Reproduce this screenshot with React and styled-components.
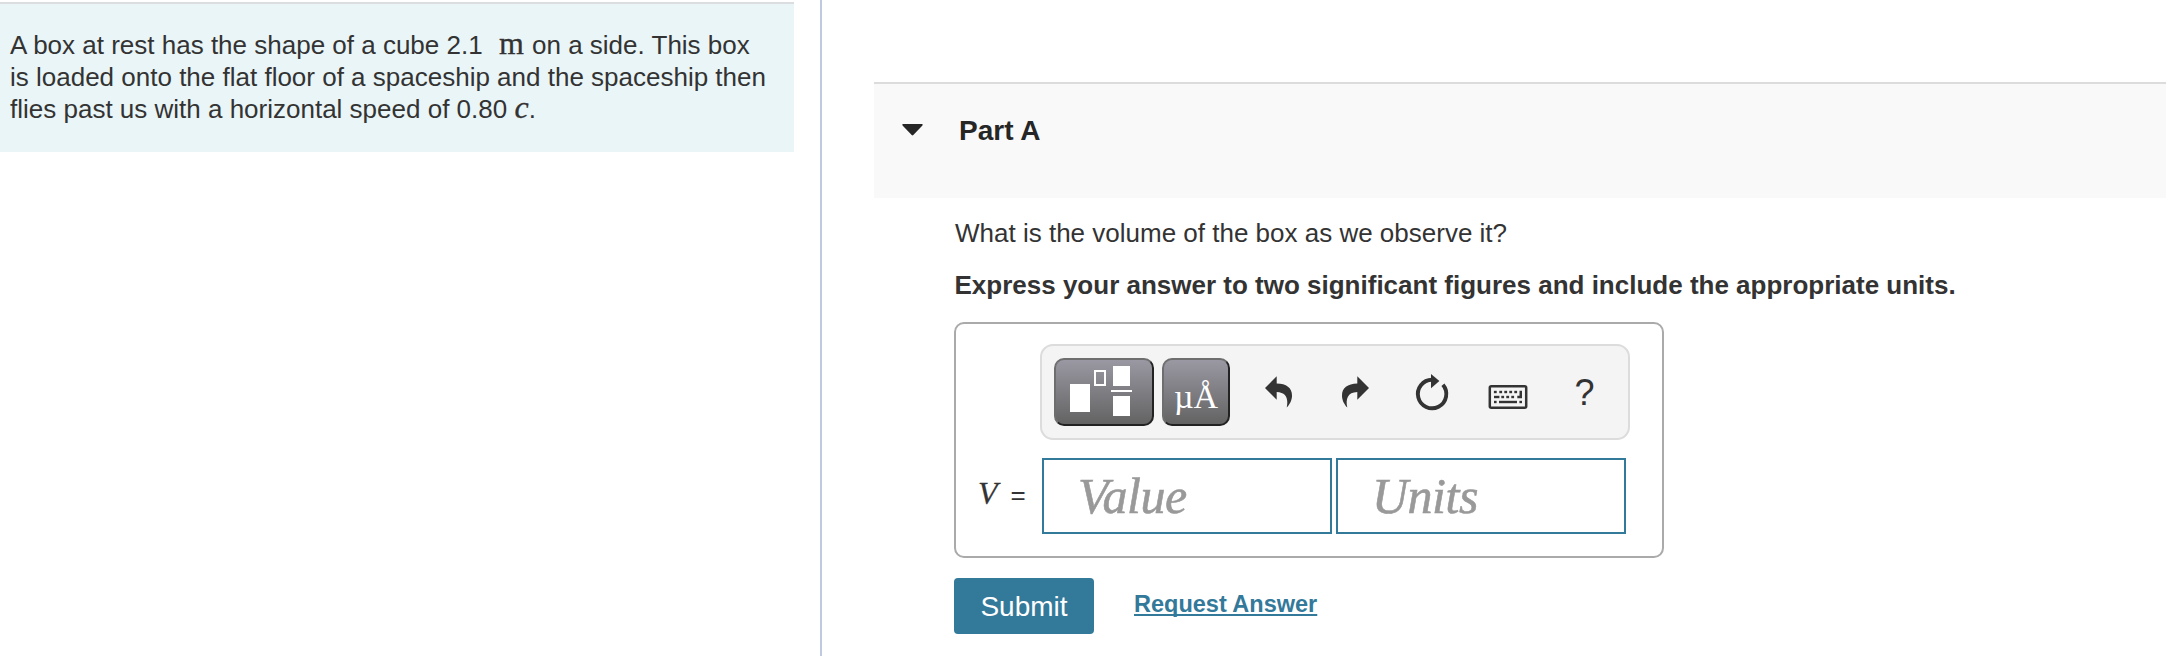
import React from "react";
import styled, { createGlobalStyle } from "styled-components";

const GlobalStyle = createGlobalStyle`
  body {
    margin: 0;
    background: #fff;
    color: #333;
    font-family: "Liberation Sans", Arial, sans-serif;
    font-size: 26px;
    line-height: 32px;
  }

  * {
    box-sizing: border-box;
  }
`;

const Page = styled.div`
  display: flex;
  height: 656px;
  overflow: hidden;
`;

const Sidebar = styled.aside`
  width: 822px;
  flex-shrink: 0;
  padding-top: 2px;
  border-right: 2px solid #bfcadf;
`;

const Intro = styled.div`
  width: 794px;
  height: 150px;
  padding: 25px 0 0 10px;
  border-top: 2px solid #dcdde0;
  background: #eaf5f7;
  white-space: nowrap;
`;

const MathText = styled.span`
  font-family: "Liberation Serif", serif;
  font-size: 32px;
  font-style: ${(props) => (props.$italic ? "italic" : "normal")};
  line-height: 0;
  margin-left: ${(props) => props.$gap || 0}px;
  margin-right: ${(props) => (props.$gap ? 1 : 0)}px;
  -webkit-text-stroke: 0.3px #333;
`;

const Main = styled.main`
  flex: 1;
  padding: 82px 0 0 52px;
`;

const PartHeader = styled.div`
  display: flex;
  height: 116px;
  padding: 30px 0 0 28px;
  border-top: 2px solid #dcdcdc;
  background: #f9f9f9;
`;

const Caret = styled.svg`
  width: 21px;
  height: 12px;
  margin-top: 10px;
`;

const PartTitle = styled.h2`
  margin: 0 0 0 36px;
  font-size: 28px;
  line-height: 34px;
  color: #262626;
`;

const PartBody = styled.div`
  padding: 19px 0 0 80px;
`;

const Question = styled.p`
  margin: 0 0 20px;
  padding-left: 1px;
`;

const Instruction = styled.p`
  margin: 0 0 21px;
  padding-left: 0.5px;
  font-weight: 700;
`;

const AnswerBox = styled.div`
  width: 710px;
  height: 236px;
  padding: 20px 32px 0 20px;
  border: 2px solid #aaa;
  border-radius: 10px;
`;

const Toolbar = styled.div`
  display: flex;
  width: 590px;
  height: 96px;
  margin-left: 64px;
  padding: 12px 8px 12px 12px;
  border: 2px solid #dcdcdc;
  border-radius: 13px;
  background: #f4f4f4;
`;

const DarkButton = styled.button`
  display: flex;
  flex-shrink: 0;
  justify-content: center;
  width: ${(props) => props.$width}px;
  height: 68px;
  margin: 0 8px 0 0;
  padding: 0;
  border: 2px solid;
  border-color: #6e6e6e #222 #222 #6e6e6e;
  border-radius: 10px;
  background: linear-gradient(#9a98a2, #636363);
  color: #fff;
  font-family: "Liberation Serif", serif;
  font-size: 34px;
  line-height: 74px;
`;

const ToolSlot = styled.button`
  display: block;
  flex-shrink: 0;
  width: 76px;
  height: 68px;
  margin: 0 0 0 ${(props) => props.$offset || 0}px;
  padding: 0;
  border: 0;
  background: none;
  color: #333;
  font: 36px/69px "Liberation Sans", sans-serif;
`;

const HelpSlot = styled(ToolSlot)`
  padding-left: 5px;
`;

const Icon = styled.svg`
  display: block;
  fill: #333;
`;

const InputRow = styled.div`
  display: flex;
  margin-top: 18px;
`;

const Label = styled.div`
  width: 66px;
  padding: 21px 0 0 2px;
  white-space: nowrap;
`;

const Equals = styled.span`
  margin-left: 13px;
`;

const Field = styled.input`
  width: 290px;
  height: 76px;
  margin: 0 4px 0 0;
  padding: 0 0 0 ${(props) => props.$indent}px;
  border: 2px solid #33799a;
  border-radius: 0;
  background: #fff;
  font-family: "Liberation Serif", serif;
  font-size: 50px;
  font-style: italic;
  letter-spacing: -0.5px;

  &::placeholder {
    color: #999;
    opacity: 1;
    -webkit-text-stroke: 0.6px #999;
  }
`;

const Actions = styled.div`
  display: flex;
  margin-top: 20px;
`;

const SubmitButton = styled.button`
  width: 140px;
  height: 56px;
  padding: 0;
  border: 0;
  border-radius: 4px;
  background: #33799a;
  color: #fff;
  font: 28px/57px "Liberation Sans", sans-serif;
`;

const RequestLink = styled.a`
  margin: 10px 0 0 40px;
  color: #33799a;
  font-size: 23.5px;
  font-weight: 700;
  text-decoration: underline;
  text-decoration-thickness: 2px;
  text-underline-offset: 2px;
  text-decoration-skip-ink: none;
`;

const arrow =
  "M25 30L36.7 18.3V25.6C46.5 25.8 52.2 30 52 38C51.9 42.5 49.5 46.8 46.7 49.5C48.5 41 46.5 34.3 36.7 34V41.7Z";

const TemplatesIcon = () => (
  <svg width="96" height="64" viewBox="2 2 96 64" fill="#fff">
    <rect x="16" y="26" width="20" height="28" />
    <rect x="41" y="13" width="10" height="14" fill="none" stroke="#fff" strokeWidth="2" />
    <rect x="59" y="8" width="17" height="20" />
    <rect x="57" y="32" width="21" height="2" />
    <rect x="59" y="38" width="17" height="20" />
  </svg>
);

const KeyboardIcon = () => (
  <Icon width="76" height="68">
    <rect x="21.8" y="28.2" width="36.4" height="21.6" rx="1.5" fill="none" stroke="#333" strokeWidth="2.5" />
    {[27.3, 32.7, 37.7, 42.7, 47.7].map((x) => (
      <rect key={x} x={x - 1.4} y="32.8" width="2.8" height="2.4" />
    ))}
    <rect x="26" y="37.8" width="5.4" height="2.4" />
    {[34.7, 39.7, 44.7].map((x) => (
      <rect key={x} x={x - 1.4} y="37.8" width="2.8" height="2.4" />
    ))}
    <path d="M51.5 32.8H54V40.2H49.3V37.8H51.5Z" />
    <rect x="26" y="42.8" width="2.6" height="2.4" />
    <rect x="31" y="42.8" width="18" height="2.4" />
    <rect x="51.4" y="42.8" width="2.6" height="2.4" />
  </Icon>
);

const App = () => {
  return (
    <Page>
      <GlobalStyle />
      <Sidebar>
        <Intro>
          A box at rest has the shape of a cube 2.1&nbsp;
          <MathText $gap={9}>m</MathText> on a side. This box
          <br />
          is loaded onto the flat floor of a spaceship and the spaceship then
          <br />
          flies past us with a horizontal speed of 0.80 <MathText $italic>c</MathText>.
        </Intro>
      </Sidebar>
      <Main>
        <PartHeader>
          <Caret viewBox="0 0 21 12">
            <path d="M1 0H20Q21.3 .6 20.2 1.7L11.3 11.1Q10.5 11.9 9.7 11.1L.8 1.7Q-.3 .6 1 0Z" fill="#262626" />
          </Caret>
          <PartTitle>Part A</PartTitle>
        </PartHeader>
        <PartBody>
          <Question>What is the volume of the box as we observe it?</Question>
          <Instruction>
            Express your answer to two significant figures and include the appropriate units.
          </Instruction>
          <AnswerBox>
            <Toolbar>
              <DarkButton $width={100}>
                <TemplatesIcon />
              </DarkButton>
              <DarkButton $width={68}>µÅ</DarkButton>
              <ToolSlot $offset={2}>
                <Icon width="76" height="68">
                  <path d={arrow} />
                </Icon>
              </ToolSlot>
              <ToolSlot>
                <Icon width="76" height="68">
                  <path d={arrow} transform="translate(78 0) scale(-1 1)" />
                </Icon>
              </ToolSlot>
              <ToolSlot>
                <Icon width="76" height="68">
                  <path d="M50.9 26.8A14.2 14.2 0 1 1 40 21.8" fill="none" stroke="#333" strokeWidth="3.9" />
                  <path d="M39 16L47.4 23L39 30.3Z" />
                </Icon>
              </ToolSlot>
              <ToolSlot>
                <KeyboardIcon />
              </ToolSlot>
              <HelpSlot>?</HelpSlot>
            </Toolbar>
            <InputRow>
              <Label>
                <MathText $italic>V</MathText>
                <Equals>=</Equals>
              </Label>
              <Field placeholder="Value" $indent={34} />
              <Field placeholder="Units" $indent={34} />
            </InputRow>
          </AnswerBox>
          <Actions>
            <SubmitButton>Submit</SubmitButton>
            <RequestLink>Request Answer</RequestLink>
          </Actions>
        </PartBody>
      </Main>
    </Page>
  );
};

export default App;
